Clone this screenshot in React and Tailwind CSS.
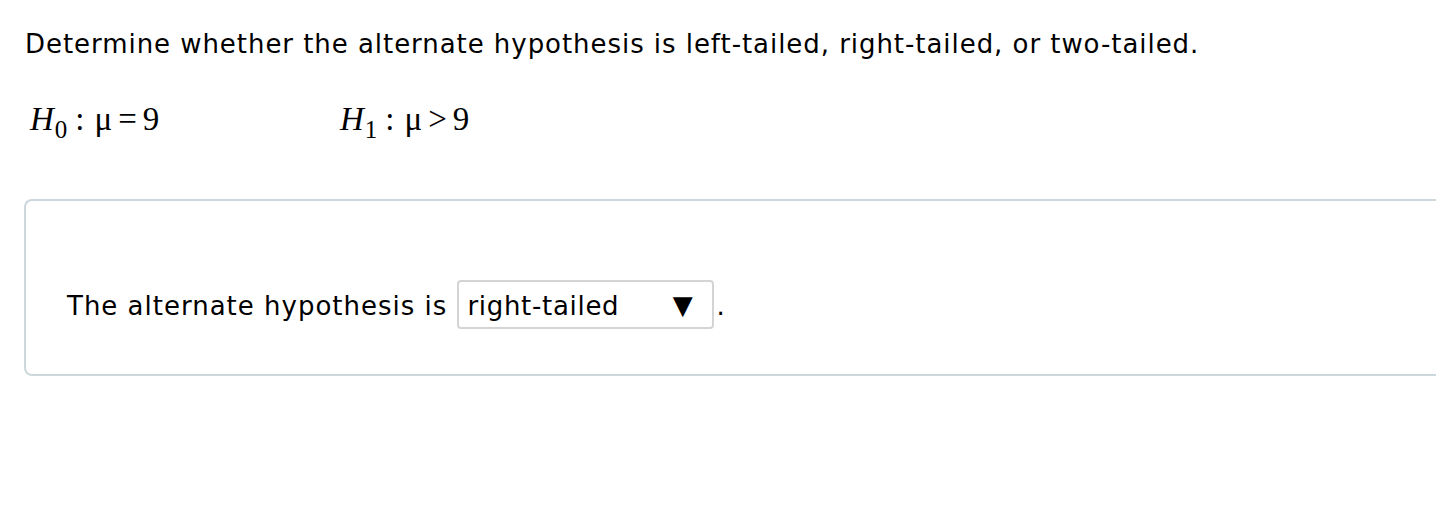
import React from "react";

export default function App() {
  const verdana = { fontFamily: '"DejaVu Sans", Verdana, sans-serif' };
  return (
    <div className="w-[1436px] h-[532px] bg-white overflow-hidden text-black" style={verdana}>
      <div className="pl-[25px] pt-[29px] text-[26px] leading-[30px] tracking-[0.95px] whitespace-nowrap">
        Determine whether the alternate hypothesis is left-tailed, right-tailed, or two-tailed.
      </div>
      <div className="flex pl-[30px] pt-[39px] text-[33px] leading-[42px] font-['Liberation_Serif',serif] items-baseline">
        <div className="w-[310px] whitespace-nowrap flex items-baseline">
          <i>H</i>
          <span className="text-[25px] relative top-[8px] ml-[1px]">0</span>
          <span className="ml-[8px] mr-[10px]">:</span>
          <span>μ</span>
          <span className="mx-[6px]">=</span>
          <span>9</span>
        </div>
        <div className="whitespace-nowrap flex items-baseline">
          <i>H</i>
          <span className="text-[25px] relative top-[8px] ml-[1px]">1</span>
          <span className="ml-[8px] mr-[10px]">:</span>
          <span>μ</span>
          <span className="mx-[6px]">&gt;</span>
          <span>9</span>
        </div>
      </div>
      <div className="ml-[24px] mt-[56px] h-[177px] border-2 border-r-0 border-[#ccd8db] rounded-l-[8px] flex items-start pt-[79px] pl-[41px]">
        <span className="text-[26px] tracking-[1px] leading-[48px] relative top-[2px]">The alternate hypothesis is</span>
        <div className="ml-[10px] w-[257px] h-[49px] border-2 border-[#d4d4d4] rounded-[4px] flex items-center justify-between pl-[8px] pr-[19px] text-[26px] tracking-[0.7px]">
          <span className="relative top-[2px]">right-tailed</span>
          <span className="text-[26px] relative top-[1px]">▼</span>
        </div>
        <span className="text-[26px] leading-[48px] ml-[2px] relative top-[2px]">.</span>
      </div>
    </div>
  );
}
